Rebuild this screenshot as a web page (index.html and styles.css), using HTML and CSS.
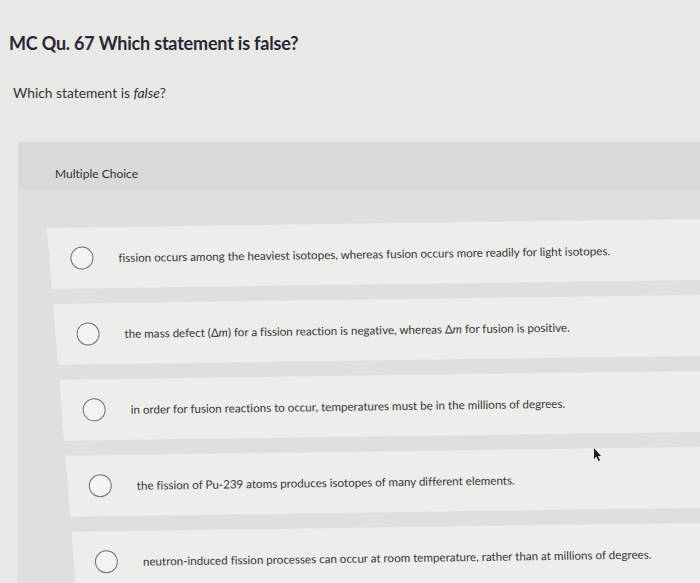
FILE: index.html
```html
<!DOCTYPE html>
<html lang="en">
<head>
  <meta charset="UTF-8" />
  <meta name="viewport" content="width=device-width, initial-scale=1.0"/>
  <title>MC Qu. 67</title>
  <link rel="stylesheet" href="styles.css">
</head>
<body>
  <h1 class="title">MC Qu. 67 Which statement is false?</h1>
  <p class="prompt">Which statement is <em>false</em>?</p>

  <div class="panel">
    <div class="panel-head">Multiple Choice</div>
    <div class="panel-body">
      <ul class="options">
        <li class="option">
          <span class="radio"></span>
          <span class="option-text">fission occurs among the heaviest isotopes, whereas fusion occurs more readily for light isotopes.</span>
        </li>
        <li class="option">
          <span class="radio"></span>
          <span class="option-text">the mass defect (&Delta;<i>m</i>) for a fission reaction is negative, whereas &Delta;<i>m</i> for fusion is positive.</span>
        </li>
        <li class="option">
          <span class="radio"></span>
          <span class="option-text">in order for fusion reactions to occur, temperatures must be in the millions of degrees.</span>
        </li>
        <li class="option">
          <span class="radio"></span>
          <span class="option-text">the fission of Pu-239 atoms produces isotopes of many different elements.</span>
        </li>
        <li class="option">
          <span class="radio"></span>
          <span class="option-text">neutron-induced fission processes can occur at room temperature, rather than at millions of degrees.</span>
        </li>
      </ul>
    </div>
  </div>

  <!-- mouse pointer -->
  <svg class="cursor" width="9" height="15" viewBox="0 0 9 15">
    <path d="M1 1 L1 12 L3.5 9.5 L5.5 14 L7 13.3 L5 9 L8 9 Z" fill="#1d1d1d"/>
  </svg>
</body>
</html>
```

FILE: styles.css
```css
body {
  font-family: Lato, "Liberation Sans", sans-serif;
  font-variant-ligatures: none;
  background: #e8e8e7;
  color: #3a3a3a;
  margin: 0;
  overflow: hidden;
  position: relative;
}
.title {
  font-size: 18px;
  font-weight: 700;
  letter-spacing: -0.2px;
  color: #2c2633;
  margin: 31px 0 0 9px;
  line-height: 24px;
}
.prompt {
  font-size: 13.8px;
  margin: 29px 0 0 13px;
  line-height: 18px;
  color: #333;
}
.prompt em {
  font-style: italic;
}
.panel {
  margin: 40px 0 0 18px;
  background: #dfdfdf;
  overflow: hidden;
}
.panel-head {
  background: #d9d9d9;
  font-size: 12px;
  line-height: 14px;
  padding: 25px 0 9px 37px;
  color: #333;
}
.panel-body {
  padding: 38px 0 0 29px;
}
.options {
  list-style: none;
  margin: 0 -60px 0 0;
  padding: 0;
  display: flex;
  flex-direction: column;
  gap: 15px;
  transform: rotate(-0.8deg) skewX(3.8deg);
  transform-origin: top left;
}
.option {
  display: flex;
  align-items: center;
  gap: 25px;
  height: 61px;
  padding-left: 21px;
  background: #ededec;
}
.option > * {
  transform: skewX(-3.8deg);
}
.radio {
  width: 21px;
  height: 21px;
  border: 1.5px solid #747474;
  border-radius: 50%;
  background: #f3f3f3;
  flex-shrink: 0;
}
.option-text {
  font-size: 11.6px;
  color: #363636;
}
.cursor {
  position: absolute;
  left: 593px;
  top: 447px;
}
```
